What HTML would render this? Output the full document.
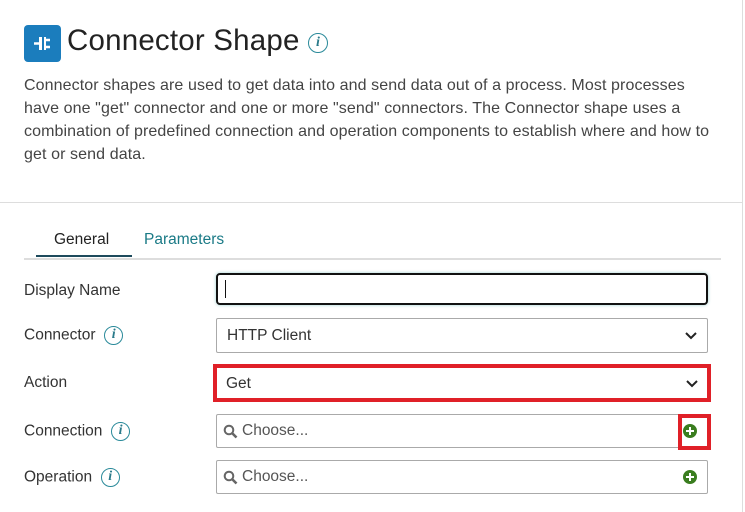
<!DOCTYPE html>
<html><head><meta charset="utf-8"><style>
*{box-sizing:border-box;margin:0;padding:0}
body{width:745px;height:512px;background:#fff;font-family:"Liberation Sans",sans-serif;color:#333;position:relative;overflow:hidden}
.abs{position:absolute}
.icon{left:24px;top:25px;width:37px;height:37px;background:#1b7dbd;border-radius:4px}
h1{left:67px;top:24px;font-size:29.5px;font-weight:normal;color:#222;letter-spacing:0.2px}
.desc{left:24px;top:74px;width:694px;font-size:16px;letter-spacing:0.1px;line-height:23px;color:#444}
.hr{left:0;top:202px;width:742px;height:1px;background:#ddd}
.vr{left:742px;top:0;width:1px;height:512px;background:#ddd}
.tab{top:231px;font-size:15.5px}
.lbl{left:24px;font-size:15.5px;color:#333}
.box{left:216px;width:492px;border:1px solid #aaa;border-radius:2px;font-size:15.5px;color:#333;padding-left:10px;display:flex;align-items:center}
.chev{position:absolute;right:10px;top:50%;margin-top:-4px}
.info{display:inline-block;width:19px;height:19px;border:1.5px solid #2a8a9a;border-radius:50%;color:#2a7a8a;font-family:"Liberation Serif",serif;font-style:italic;font-weight:bold;font-size:14px;text-align:center;line-height:16px;vertical-align:middle}
.plus{position:absolute;right:9px;top:50%;margin-top:-7px;width:14px;height:14px;border-radius:50%;background:#3a7d1f}
.plus:before{content:"";position:absolute;left:3px;top:6px;width:8px;height:2px;background:#fff}
.plus:after{content:"";position:absolute;left:6px;top:3px;width:2px;height:8px;background:#fff}
.red{border:4px solid #e02028}
.mag{margin-right:4px;margin-left:-4px}
</style></head><body>
<div class="abs icon"><svg width="37" height="37" viewBox="0 0 37 37"><path d="M10 18.5h5" stroke="#fff" stroke-width="2.5"/><path d="M15 12h3v13h-3z M20 12h2v13h-2z" fill="#fff"/><path d="M22 15h4M22 22h4" stroke="#fff" stroke-width="2.5"/></svg></div>
<h1 class="abs">Connector Shape <span class="info" style="width:20px;height:20px;font-size:14px;line-height:17px;vertical-align:4px">i</span></h1>
<div class="abs desc">Connector shapes are used to get data into and send data out of a process. Most processes have one "get" connector and one or more "send" connectors. The Connector shape uses a combination of predefined connection and operation components to establish where and how to get or send data.</div>
<div class="abs hr"></div>
<div class="abs vr"></div>
<div class="abs tab" style="left:54px;color:#222">General</div>
<div class="abs tab" style="left:144px;color:#1a7a86">Parameters</div>
<div class="abs" style="left:36px;top:255px;width:96px;height:2px;background:#1d4a5c"></div>
<div class="abs" style="left:24px;top:258px;width:697px;height:2px;background:#ddd"></div>

<div class="abs lbl" style="top:282px">Display Name</div>
<div class="abs box" style="top:273px;height:32px;border:2px solid #111;border-radius:4px;box-shadow:0 0 3px #9cc"><span style="width:1px;height:18px;background:#111;margin-left:-3px"></span></div>

<div class="abs lbl" style="top:326px">Connector &nbsp;<span class="info">i</span></div>
<div class="abs box" style="top:318px;height:35px">HTTP Client<svg class="chev" width="12" height="8"><path d="M1 1l5 5 5-5" stroke="#222" stroke-width="2" fill="none"/></svg></div>

<div class="abs lbl" style="top:374px">Action</div>
<div class="abs red" style="left:213px;top:364px;width:498px;height:38px"></div>
<div class="abs box" style="top:368px;height:31px;border:none">Get<svg class="chev" width="12" height="8"><path d="M1 1l5 5 5-5" stroke="#222" stroke-width="2" fill="none"/></svg></div>

<div class="abs lbl" style="top:422px">Connection &nbsp;<span class="info">i</span></div>
<div class="abs box" style="top:414px;height:34px;color:#555"><svg class="mag" width="15" height="15" viewBox="0 0 15 15"><circle cx="6" cy="6" r="4.3" stroke="#666" stroke-width="2" fill="none"/><path d="M9 9l4.5 4.5" stroke="#666" stroke-width="2.6"/></svg>Choose...<span class="plus" style="right:10px;margin-top:-7px"></span></div>
<div class="abs red" style="left:678px;top:414px;width:33px;height:36px"></div>

<div class="abs lbl" style="top:468px">Operation &nbsp;<span class="info">i</span></div>
<div class="abs box" style="top:460px;height:34px;color:#555"><svg class="mag" width="15" height="15" viewBox="0 0 15 15"><circle cx="6" cy="6" r="4.3" stroke="#666" stroke-width="2" fill="none"/><path d="M9 9l4.5 4.5" stroke="#666" stroke-width="2.6"/></svg>Choose...<span class="plus" style="right:10px"></span></div>
</body></html>
